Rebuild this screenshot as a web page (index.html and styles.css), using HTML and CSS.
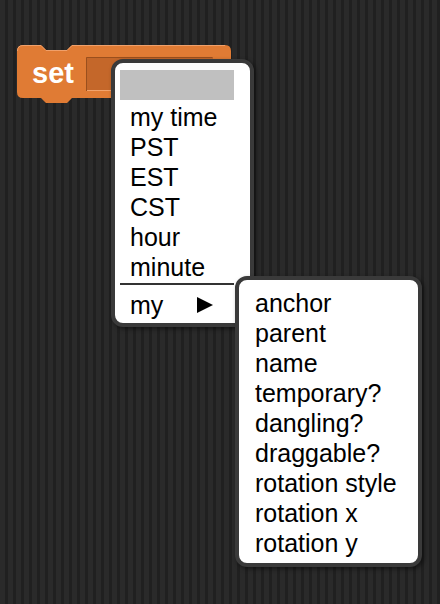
FILE: index.html
```html
<!DOCTYPE html>
<html>
<head>
<meta charset="utf-8">
<link rel="stylesheet" href="styles.css">
</head>
<body>
<div class="canvas">
  <svg class="block" width="240" height="110" viewBox="0 0 240 110">
    <path class="block-body" d="M17,51 Q17,45 23,45 L41,45 L46,50 L67,50 L72,45 L225,45 Q231,45 231,51 L231,92 Q231,98 225,98 L72,98 L67,103 L46,103 L41,98 L23,98 Q17,98 17,92 Z"/>
    <path class="block-hi" d="M17.5,51 Q17.5,45.5 23,45.5 L41,45.5 L46,50.5 L67,50.5 L72,45.5 L225,45.5"/>
    <rect class="slot" x="86" y="57" width="127" height="34" rx="1"/>
    <path class="slot-lo" d="M86.5,90.5 L212.5,90.5"/>
    <path class="slot-top" d="M86.5,91 L86.5,57.5 L212.5,57.5"/>
    <text class="set-label" x="32" y="83">set</text>
  </svg>

  <div class="menu main-menu">
    <div class="item blank"></div>
    <div class="item">my time</div>
    <div class="item">PST</div>
    <div class="item">EST</div>
    <div class="item">CST</div>
    <div class="item">hour</div>
    <div class="item">minute</div>
    <div class="sep"></div>
    <div class="item sub">
      <span>my</span>
      <svg class="arrow" width="16" height="16" viewBox="0 0 16 16"><polygon points="0,0 16,8 0,16"/></svg>
    </div>
  </div>

  <div class="menu sub-menu">
    <div class="item">anchor</div>
    <div class="item">parent</div>
    <div class="item">name</div>
    <div class="item">temporary?</div>
    <div class="item">dangling?</div>
    <div class="item">draggable?</div>
    <div class="item">rotation style</div>
    <div class="item">rotation x</div>
    <div class="item">rotation y</div>
  </div>
</div>
</body>
</html>
```

FILE: styles.css
```css
html, body {
  margin: 0;
  padding: 0;
}
body {
  width: 440px;
  height: 604px;
  overflow: hidden;
  font-family: "Liberation Sans", Arial, Helvetica, sans-serif;
}
.canvas {
  position: relative;
  width: 440px;
  height: 604px;
  background: repeating-linear-gradient(90deg, #2a2a2a 0 5px, #202020 5px 8px);
}
.block {
  position: absolute;
  left: 0;
  top: 0;
}
.block-body {
  fill: #e07b34;
}
.block-hi {
  fill: none;
  stroke: #f0a06a;
  stroke-width: 1;
}
.slot {
  fill: #c4672a;
}
.slot-lo {
  stroke: #f2a36c;
  stroke-width: 1;
}
.slot-top {
  fill: none;
  stroke: #9a4f1d;
  stroke-width: 1;
}
.set-label {
  font-family: "Liberation Sans", Arial, sans-serif;
  font-weight: bold;
  font-size: 29px;
  fill: #ffffff;
}
.menu {
  position: absolute;
  background: #ffffff;
  border: 4px solid #3a3a3a;
  border-radius: 12px;
  box-shadow: 2px 2px 4px rgba(0, 0, 0, 0.5);
  display: flex;
  flex-direction: column;
  box-sizing: border-box;
}
.main-menu {
  left: 111px;
  top: 59px;
  width: 143px;
  height: 268px;
  padding: 7px 16px 0 5px;
}
.sub-menu {
  left: 235px;
  top: 276px;
  width: 187px;
  height: 291px;
  padding: 8px 0 0 0;
}
.item {
  height: 30px;
  line-height: 30px;
  font-size: 25px;
  color: #000;
  padding-left: 10px;
  white-space: nowrap;
  flex: none;
}
.sub-menu .item {
  padding-left: 16px;
}
.item.blank {
  background: #c0c0c0;
  margin-bottom: 2px;
}
.sep {
  height: 2px;
  background: #333;
  margin: 1px 0 5px 0;
  flex: none;
}
.item.sub {
  display: flex;
  align-items: center;
  justify-content: space-between;
  padding-right: 21px;
}
.arrow {
  fill: #000;
  display: block;
}
```
